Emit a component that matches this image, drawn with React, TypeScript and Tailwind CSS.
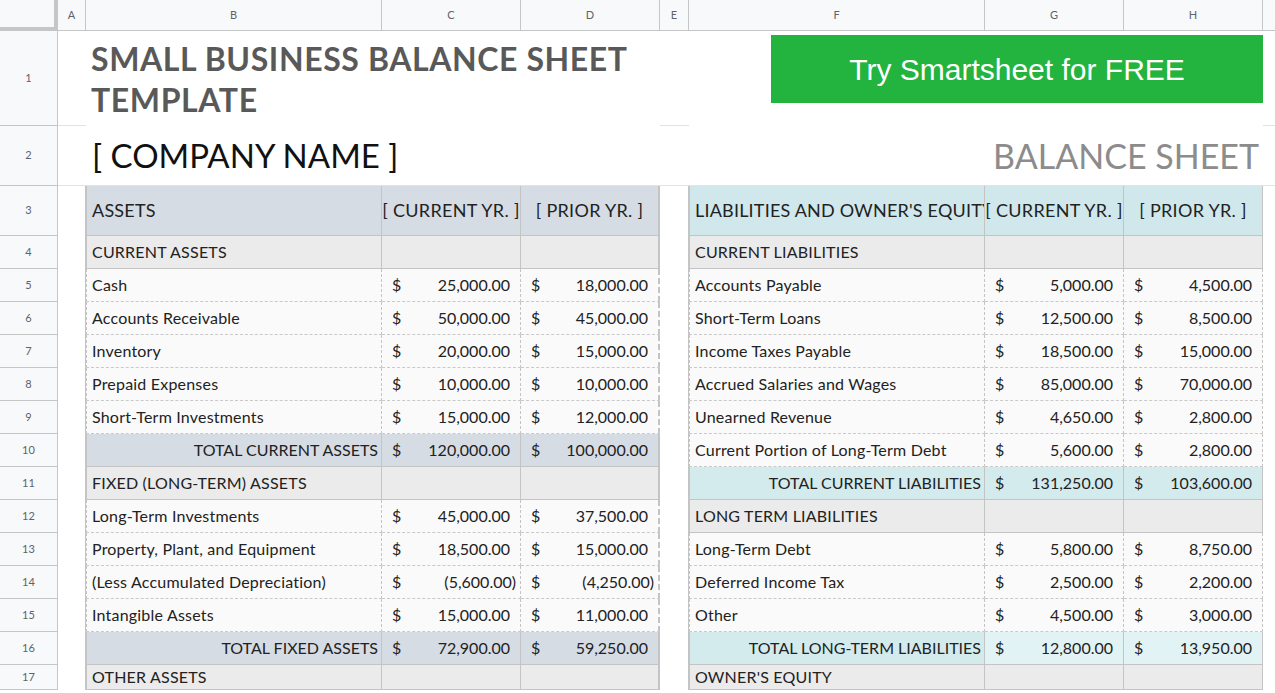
import React from 'react';

type Kind = 'head' | 'section' | 'data' | 'total';
interface Row {
  kind: Kind;
  label: string;
  cur?: string;
  prior?: string;
}

const left: Row[] = [
  { kind: 'head', label: 'ASSETS', cur: '[ CURRENT YR. ]', prior: '[ PRIOR YR. ]' },
  { kind: 'section', label: 'CURRENT ASSETS' },
  { kind: 'data', label: 'Cash', cur: '25,000.00', prior: '18,000.00' },
  { kind: 'data', label: 'Accounts Receivable', cur: '50,000.00', prior: '45,000.00' },
  { kind: 'data', label: 'Inventory', cur: '20,000.00', prior: '15,000.00' },
  { kind: 'data', label: 'Prepaid Expenses', cur: '10,000.00', prior: '10,000.00' },
  { kind: 'data', label: 'Short-Term Investments', cur: '15,000.00', prior: '12,000.00' },
  { kind: 'total', label: 'TOTAL CURRENT ASSETS', cur: '120,000.00', prior: '100,000.00' },
  { kind: 'section', label: 'FIXED (LONG-TERM) ASSETS' },
  { kind: 'data', label: 'Long-Term Investments', cur: '45,000.00', prior: '37,500.00' },
  { kind: 'data', label: 'Property, Plant, and Equipment', cur: '18,500.00', prior: '15,000.00' },
  { kind: 'data', label: '(Less Accumulated Depreciation)', cur: '(5,600.00)', prior: '(4,250.00)' },
  { kind: 'data', label: 'Intangible Assets', cur: '15,000.00', prior: '11,000.00' },
  { kind: 'total', label: 'TOTAL FIXED ASSETS', cur: '72,900.00', prior: '59,250.00' },
  { kind: 'section', label: 'OTHER ASSETS' },
];

const right: Row[] = [
  { kind: 'head', label: "LIABILITIES AND OWNER'S EQUITY", cur: '[ CURRENT YR. ]', prior: '[ PRIOR YR. ]' },
  { kind: 'section', label: 'CURRENT LIABILITIES' },
  { kind: 'data', label: 'Accounts Payable', cur: '5,000.00', prior: '4,500.00' },
  { kind: 'data', label: 'Short-Term Loans', cur: '12,500.00', prior: '8,500.00' },
  { kind: 'data', label: 'Income Taxes Payable', cur: '18,500.00', prior: '15,000.00' },
  { kind: 'data', label: 'Accrued Salaries and Wages', cur: '85,000.00', prior: '70,000.00' },
  { kind: 'data', label: 'Unearned Revenue', cur: '4,650.00', prior: '2,800.00' },
  { kind: 'data', label: 'Current Portion of Long-Term Debt', cur: '5,600.00', prior: '2,800.00' },
  { kind: 'total', label: 'TOTAL CURRENT LIABILITIES', cur: '131,250.00', prior: '103,600.00' },
  { kind: 'section', label: 'LONG TERM LIABILITIES' },
  { kind: 'data', label: 'Long-Term Debt', cur: '5,800.00', prior: '8,750.00' },
  { kind: 'data', label: 'Deferred Income Tax', cur: '2,500.00', prior: '2,200.00' },
  { kind: 'data', label: 'Other', cur: '4,500.00', prior: '3,000.00' },
  { kind: 'total', label: 'TOTAL LONG-TERM LIABILITIES', cur: '12,800.00', prior: '13,950.00' },
  { kind: 'section', label: "OWNER'S EQUITY" },
];

const font = { fontFamily: '"Lato", "Liberation Sans", sans-serif' };

const RowNum = ({ n }: { n: number }) => (
  <div className="flex items-center justify-center bg-[#f8f9fa] border-r border-b border-[#c4c7c5] text-[11px] text-[#5f6368]">
    {n}
  </div>
);

const Blank = () => <div className="border-b border-[#e2e3e3]" />;

function cellBg(kind: Kind, teal: boolean) {
  if (kind === 'head') return teal ? 'bg-[#d0e8eb]' : 'bg-[#d6dce4]';
  if (kind === 'total') return teal ? 'bg-[#d4ebee]' : 'bg-[#d6dce4]';
  if (kind === 'section') return 'bg-[#ebebeb]';
  return 'bg-[#fafafa]';
}

function border(kind: Kind) {
  return kind === 'data'
    ? 'border-b border-dashed border-b-[#c9c9c9]'
    : 'border-b border-b-[#c4c4c4]';
}

const Money = ({ row, v, teal, last }: { row: Row; v?: string; teal: boolean; last?: boolean }) => {
  const base = `${cellBg(row.kind, teal)} ${border(row.kind)} border-r border-r-[#c4c4c4] ${last && !teal ? 'border-r-2 border-r-[#b0b0b0]' : ''}`;
  if (row.kind === 'head')
    return (
      <div className={`${base} flex items-center justify-center overflow-hidden whitespace-nowrap text-[18px] tracking-[0.3px] text-[#222]`}>
        {v}
      </div>
    );
  if (!v) return <div className={base} />;
  const neg = v.startsWith('(');
  return (
    <div className={`${base} flex items-center px-[10px] text-[16px] text-[#222] ${row.kind === 'total' && teal && row.label.startsWith('TOTAL LONG') ? 'bg-[#e2f3f5]' : ''}`}>
      <span>$</span>
      <span className={`ml-auto ${neg ? '-mr-[6px]' : ''}`}>{v}</span>
    </div>
  );
};

const Label = ({ row, teal }: { row: Row; teal: boolean }) => (
  <div
    className={`${cellBg(row.kind, teal)} ${border(row.kind)} border-r border-r-[#c4c4c4] border-l border-l-[#c4c4c4] flex items-center px-[5px] overflow-hidden whitespace-nowrap text-[#222] ${
      row.kind === 'total' ? 'justify-end text-[16px] pr-[3px]' : row.kind === 'head' ? 'text-[18px] tracking-[0.2px]' : 'text-[16px] tracking-[0.2px]'
    }`}
  >
    {row.label}
  </div>
);

const cols = ['A', 'B', 'C', 'D', 'E', 'F', 'G', 'H'];

export default function App() {
  return (
    <div className="w-[1275px] h-[693px] overflow-hidden bg-white" style={font}>
      <div className="grid grid-cols-[58px_28px_296px_139px_139px_29px_296px_139px_139px_12px] grid-rows-[31px_95px_60px_50px_repeat(13,33px)]">
        {/* column header */}
        <div className="bg-[#f8f9fa] border-r-4 border-b-4 border-[#c4c7c5]" />
        {cols.map((c) => (
          <div key={c} className="bg-[#f8f9fa] border-r border-b border-[#c4c7c5] flex items-center justify-center text-[11px] text-[#5f6368]">
            {c}
          </div>
        ))}
        <div className="bg-[#f8f9fa] border-b border-[#c4c7c5]" />

        {/* row 1 */}
        <RowNum n={1} />
        <Blank />
        <div className="col-span-3 flex flex-col justify-center pl-[5px] text-[32px] font-bold leading-[41px] text-[#595959] tracking-[0.6px]">
          <span>SMALL BUSINESS BALANCE SHEET</span>
          <span>TEMPLATE</span>
        </div>
        <Blank />
        <div className="col-span-3 flex items-start pt-[4px] pl-[82px]">
          <div className="h-[68px] w-full bg-[#22b43e] flex items-center justify-center text-white text-[30px]" style={{ fontFamily: '"Liberation Sans", sans-serif' }}>
            Try Smartsheet for FREE
          </div>
        </div>
        <Blank />

        {/* row 2 */}
        <RowNum n={2} />
        <Blank />
        <div className="col-span-3 flex items-center pl-[6px] text-[33px] text-[#111] border-b border-[#e2e3e3]">[ COMPANY NAME ]</div>
        <Blank />
        <div className="col-span-3 flex items-center justify-end pr-[4px] text-[34px] text-[#8c8c8c] border-b border-[#e2e3e3]">BALANCE SHEET</div>
        <Blank />

        {left.map((l, i) => {
          const r = right[i];
          return (
            <React.Fragment key={i}>
              <RowNum n={i + 3} />
              <div className="border-r border-r-[#c4c4c4]" />
              <Label row={l} teal={false} />
              <Money row={l} v={l.cur} teal={false} />
              <Money row={l} v={l.prior} teal={false} last />
              <div className="border-r border-r-[#c4c4c4]" />
              <Label row={r} teal />
              <Money row={r} v={r.cur} teal />
              <Money row={r} v={r.prior} teal />
              <div />
            </React.Fragment>
          );
        })}
      </div>
    </div>
  );
}
